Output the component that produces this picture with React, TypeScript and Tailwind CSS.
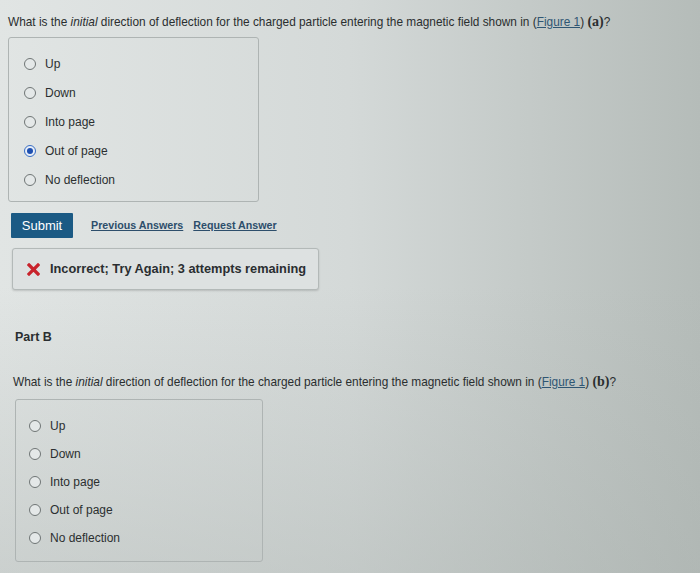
import React from "react";

const OPTIONS = ["Up", "Down", "Into page", "Out of page", "No deflection"];

function Radio({ checked }: { checked?: boolean }) {
  if (checked) {
    return (
      <span className="flex h-[12px] w-[12px] items-center justify-center rounded-full border-[1.5px] border-[#3a6fc4] bg-[#e8eef7]">
        <span className="h-[6px] w-[6px] rounded-full bg-[#1d4fb0]" />
      </span>
    );
  }
  return <span className="h-[12px] w-[12px] rounded-full border border-[#6f7575] bg-[#e4e8e8]" />;
}

function ChoiceBox({
  selected,
  rowH,
  className,
}: {
  selected?: string;
  rowH: string;
  className: string;
}) {
  return (
    <div className={`rounded-[3px] border border-[#aeb4b3] ${className}`}>
      {OPTIONS.map((o) => (
        <div key={o} className={`flex items-center gap-[9px] ${rowH}`}>
          <Radio checked={o === selected} />
          <span className="text-[12px] text-[#2b2f30]">{o}</span>
        </div>
      ))}
    </div>
  );
}

function Question({ letter, className }: { letter: string; className: string }) {
  return (
    <p className={`text-[11.85px] leading-4 text-[#2a2e2f] ${className}`}>
      What is the <i>initial</i> direction of deflection for the charged particle entering the
      magnetic field shown in (<span className="text-[#2f5673] underline">Figure 1</span>){" "}
      <b className="font-['Liberation_Serif',serif] text-[14px]">({letter})</b>?
    </p>
  );
}

export default function App() {
  return (
    <div className="h-[573px] w-[700px] overflow-hidden bg-gradient-to-r from-[#e1e5e4] via-[#d4d9d8] to-[#b5bcb9] font-['Liberation_Sans',Arial,sans-serif]">
      <div className="h-full bg-gradient-to-b from-transparent via-transparent to-[#aab1ae]/40">
        <Question letter="a" className="ml-2 pt-[14px]" />

        <ChoiceBox
          selected="Out of page"
          rowH="h-[29px]"
          className="ml-2 mt-[7px] h-[165px] w-[251px] pl-[15px] pt-[11px]"
        />

        <div className="ml-[11px] mt-[11px] flex items-center">
          <button className="h-[25px] w-[62px] rounded-[1px] bg-[#1b5a84] text-[13px] text-white">
            Submit
          </button>
          <a className="ml-[18px] text-[10.7px] font-bold text-[#2d4e6b] underline">Previous Answers</a>
          <a className="ml-[10px] text-[10.7px] font-bold text-[#2d4e6b] underline">Request Answer</a>
        </div>

        <div className="ml-3 mt-[10px] flex h-[42px] w-[307px] items-center rounded-[3px] border border-[#b3b9b8] bg-[#dde1e1] pl-[14px] shadow-[0_1px_2px_rgba(0,0,0,0.15)]">
          <svg width="13" height="13" viewBox="0 0 13 13">
            <path d="M2 2 L11 11 M11 2 L2 11" stroke="#c8232c" strokeWidth="3.2" strokeLinecap="square" />
          </svg>
          <span className="ml-[10px] text-[12.75px] font-bold text-[#2a2e30]">
            Incorrect; Try Again; 3 attempts remaining
          </span>
        </div>

        <div className="ml-[15px] mt-[38px] text-[12.5px] font-bold text-[#2a2e30]">Part B</div>

        <Question letter="b" className="ml-[13px] mt-[27px]" />

        <ChoiceBox
          rowH="h-[28px]"
          className="ml-[15px] mt-[9px] h-[163px] w-[248px] pl-[13px] pt-[12px]"
        />
      </div>
    </div>
  );
}
